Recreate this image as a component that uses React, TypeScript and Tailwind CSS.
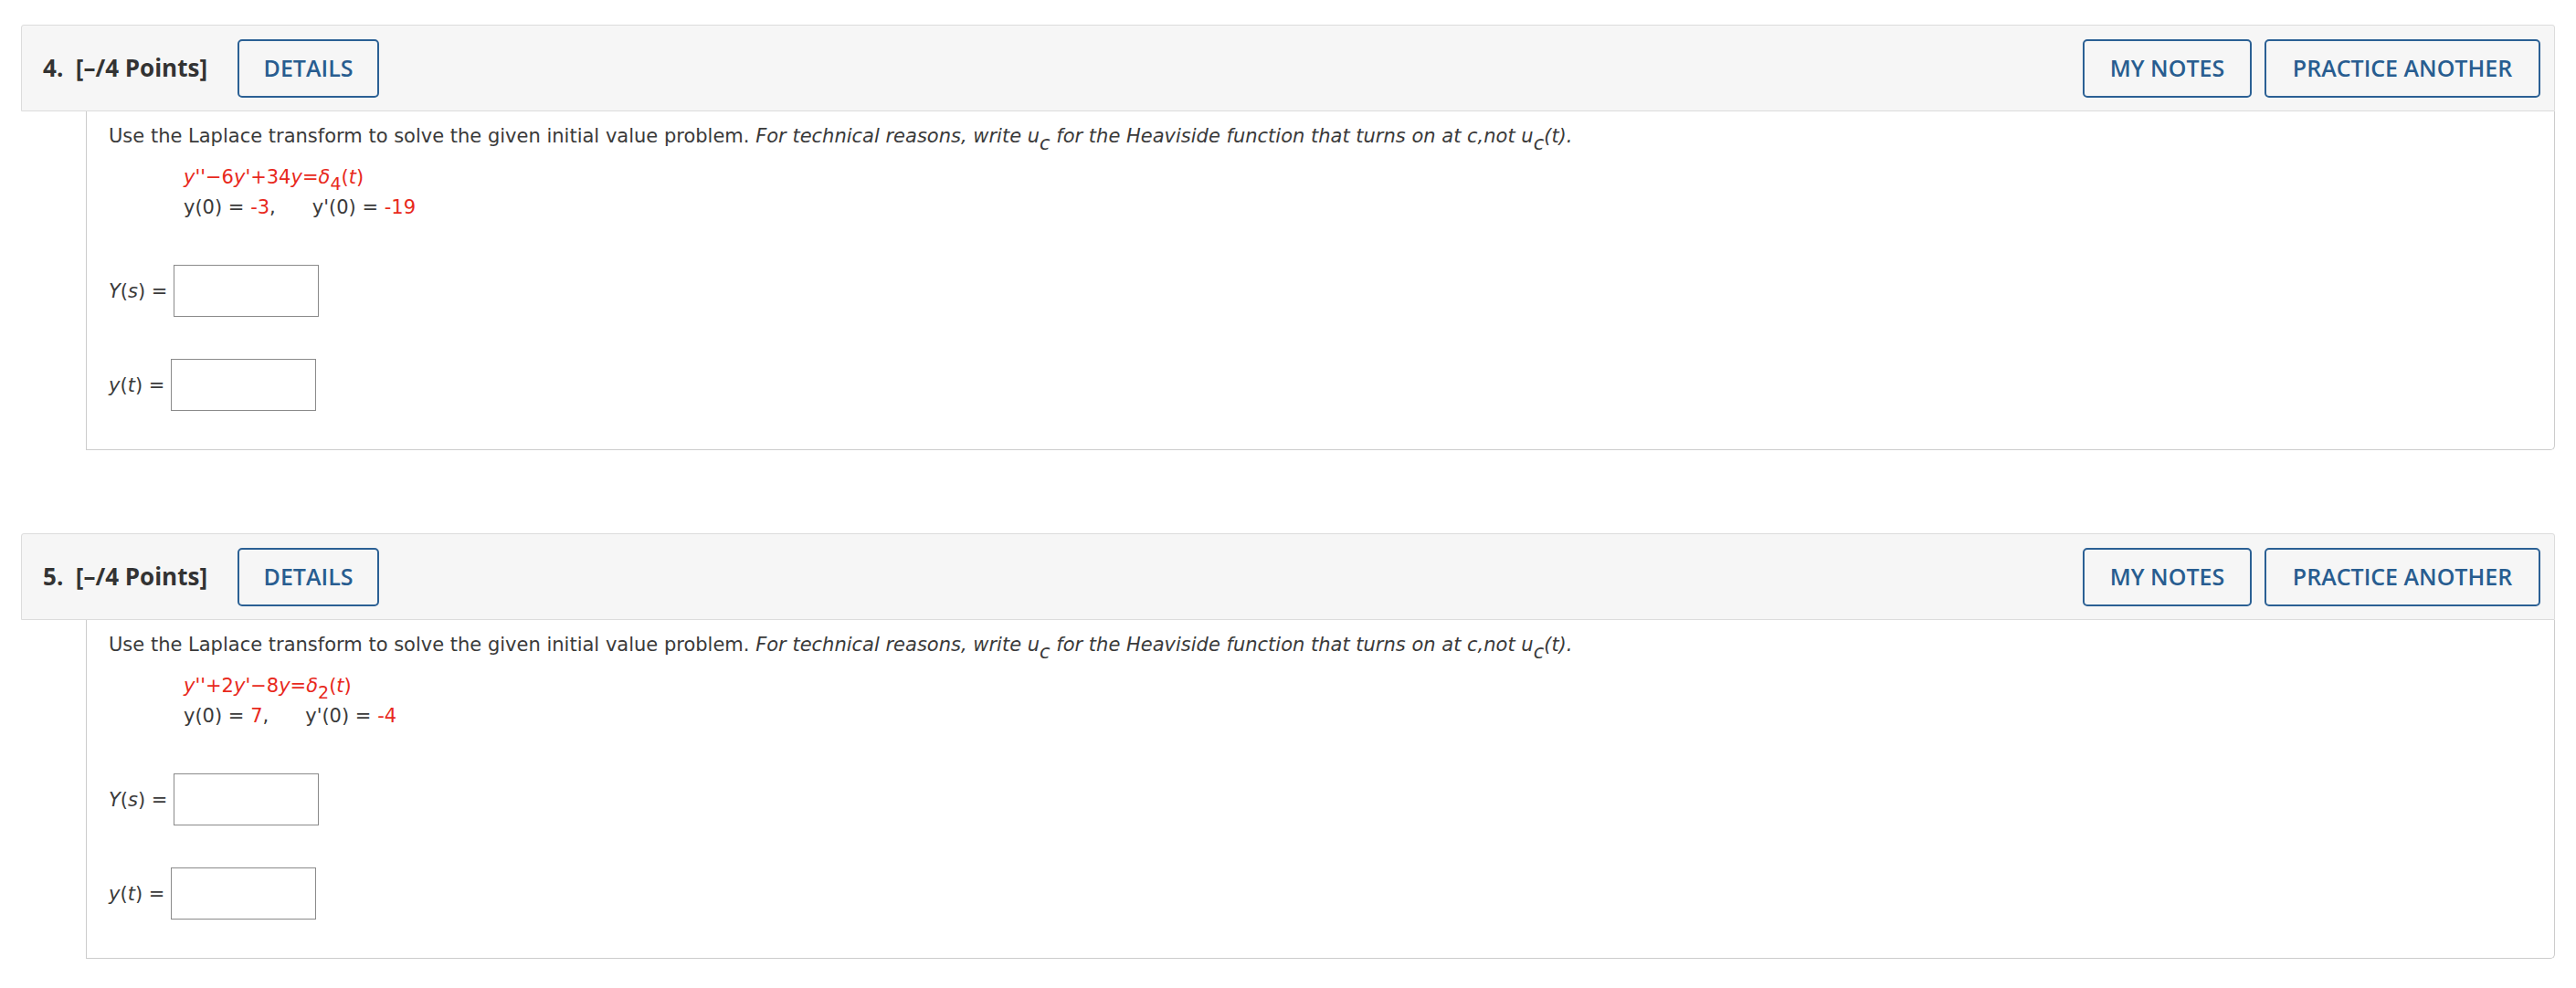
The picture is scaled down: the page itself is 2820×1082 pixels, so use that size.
import React from "react";

type Question = {
  num: number;
  eq: React.ReactNode;
  y0: string;
  dy0: string;
};

const red = "text-[#e8291c]";

function Btn({ label, w }: { label: string; w: string }) {
  return (
    <button
      className={`${w} h-[64px] shrink-0 rounded-[5px] border-2 border-[#2b6094] bg-transparent text-[25px] font-semibold text-[#285d90] flex items-center justify-center`}
      style={{ fontFamily: "'Open Sans', sans-serif" }}
    >
      {label}
    </button>
  );
}

function Sub({ children }: { children: React.ReactNode }) {
  return (
    <span className="relative top-[7px] text-[19px] leading-none">{children}</span>
  );
}

function QuestionBlock({ q }: { q: Question }) {
  return (
    <div>
      <div className="flex h-[95px] items-center rounded-t-[3px] border border-[#dcdcdc] bg-[#f6f6f6] pl-[23px] pr-[15px]">
        <span
          className="text-[26px] font-bold text-[#333333]"
          style={{ fontFamily: "'Open Sans', sans-serif" }}
        >
          {q.num}.&nbsp;&nbsp;[–/4 Points]
        </span>
        <div className="ml-[33px]">
          <Btn label="DETAILS" w="w-[155px]" />
        </div>
        <div className="ml-auto flex gap-[14px]">
          <Btn label="MY NOTES" w="w-[185px]" />
          <Btn label="PRACTICE ANOTHER" w="w-[302px]" />
        </div>
      </div>
      <div
        className="ml-[71px] h-[371px] rounded-br-[5px] border-x border-b border-[#cccccc] pl-[24px] pt-[12px] text-[21px] leading-[30px] text-[#3a3a3a]"
        style={{ fontFamily: "Verdana, 'DejaVu Sans', sans-serif" }}
      >
        <p>
          Use the Laplace transform to solve the given initial value problem.{" "}
          <i>
            For technical reasons, write u<span className="relative top-[8px]">c</span> for the
            Heaviside function that turns on at c,not u<span className="relative top-[8px]">c</span>(t).
          </i>
        </p>
        <div className="ml-[82px] mt-[15px]">
          <div className={`h-[33px] ${red}`}>{q.eq}</div>
          <div className="h-[30px]">
            y(0) = <span className={red}>{q.y0}</span>,&nbsp;&nbsp;&nbsp;&nbsp;&nbsp;&nbsp;y'(0) ={" "}
            <span className={red}>{q.dy0}</span>
          </div>
        </div>
        <div className="mt-[48px] flex items-center">
          <span>
            <i>Y</i>(<i>s</i>) =&nbsp;
          </span>
          <div className="h-[57px] w-[159px] border border-[#8a8a8a] bg-white" />
        </div>
        <div className="mt-[46px] flex items-center">
          <span>
            <i>y</i>(<i>t</i>) =&nbsp;
          </span>
          <div className="h-[57px] w-[159px] border border-[#8a8a8a] bg-white" />
        </div>
      </div>
    </div>
  );
}

const questions: Question[] = [
  {
    num: 4,
    eq: (
      <>
        <i>y''</i>−6<i>y'</i>+34<i>y</i>=<i>δ</i>
        <Sub>4</Sub>(<i>t</i>)
      </>
    ),
    y0: "-3",
    dy0: "-19",
  },
  {
    num: 5,
    eq: (
      <>
        <i>y''</i>+2<i>y'</i>−8<i>y</i>=<i>δ</i>
        <Sub>2</Sub>(<i>t</i>)
      </>
    ),
    y0: "7",
    dy0: "-4",
  },
];

export default function App() {
  return (
    <div className="h-[1082px] w-full bg-white px-[23px] pt-[27px]">
      <div className="flex flex-col gap-[91px]">
        {questions.map((q) => (
          <QuestionBlock key={q.num} q={q} />
        ))}
      </div>
    </div>
  );
}
